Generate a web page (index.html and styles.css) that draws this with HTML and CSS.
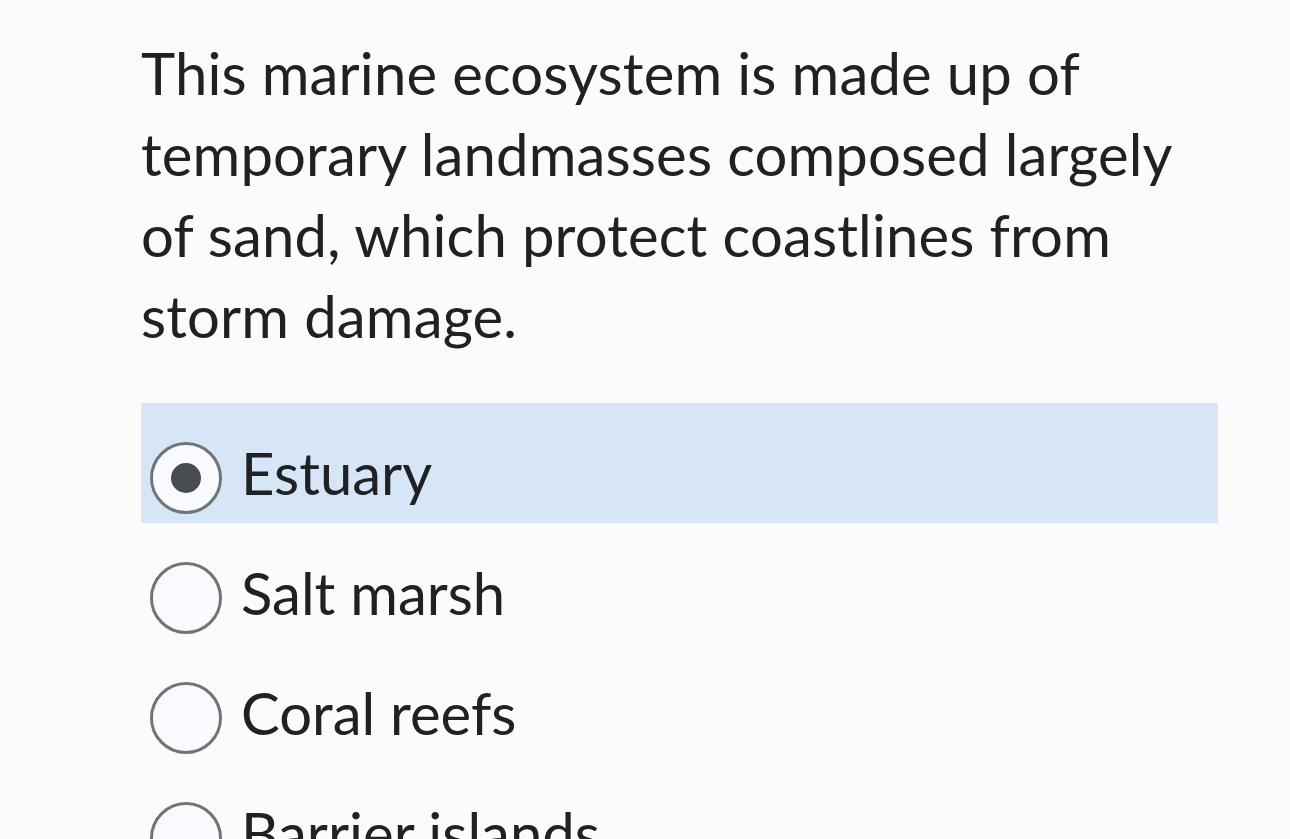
FILE: index.html
```html
<!DOCTYPE html>
<html lang="en">
<head>
<meta charset="utf-8">
<title>Question</title>
<link rel="stylesheet" href="styles.css">
</head>
<body>
<main class="quiz">
  <p class="question">This marine ecosystem is made up of temporary landmasses composed largely of sand, which protect coastlines from storm damage.</p>
  <div class="options">
    <label class="option selected"><span class="radio"><span class="dot"></span></span><span class="label">Estuary</span></label>
    <label class="option"><span class="radio"></span><span class="label">Salt marsh</span></label>
    <label class="option"><span class="radio"></span><span class="label">Coral reefs</span></label>
    <label class="option"><span class="radio"></span><span class="label">Barrier islands</span></label>
  </div>
</main>
</body>
</html>
```
FILE: styles.css
```css
html, body {
  margin: 0;
  padding: 0;
  background: #fbfbfb;
}
body {
  font-family: Lato, "Open Sans", sans-serif;
  color: #202122;
  height: 839px;
  overflow: hidden;
}
.quiz {
  padding: 32px 0 0 141px;
  width: 1077px;
}
.question {
  margin: 0;
  font-size: 58px;
  line-height: 81px;
  letter-spacing: 0.15px;
}
.options {
  margin-top: 47px;
  display: flex;
  flex-direction: column;
}
.option {
  height: 120px;
  box-sizing: border-box;
  display: flex;
  align-items: flex-start;
  padding: 35px 0 0 9px;
  gap: 19px;
}
.option.selected {
  background: #d6e6f7;
}
.radio {
  width: 72px;
  height: 72px;
  box-sizing: border-box;
  border: 3px solid #6f7477;
  border-radius: 50%;
  background: #f9fafe;
  margin-top: 4px;
  display: flex;
  align-items: center;
  justify-content: center;
  flex: none;
}
.dot {
  width: 30px;
  height: 30px;
  border-radius: 50%;
  background: #494c4e;
}
.label {
  font-size: 58px;
  line-height: 1.2;
  white-space: nowrap;
}
```
